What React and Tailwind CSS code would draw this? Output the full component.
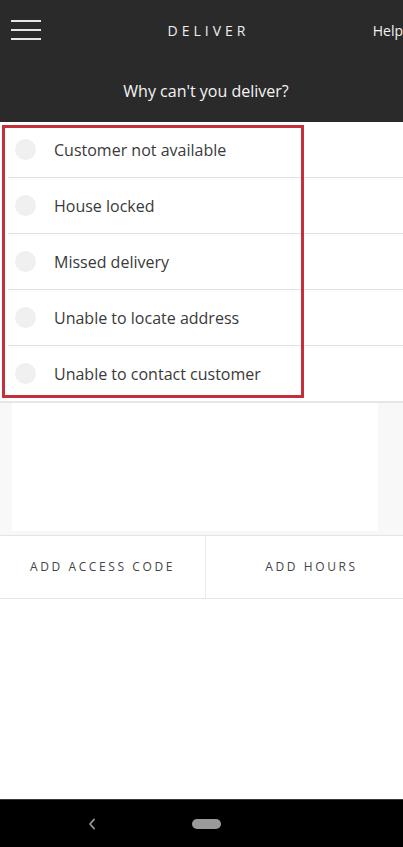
import React from 'react';

const reasons = [
  'Customer not available',
  'House locked',
  'Missed delivery',
  'Unable to locate address',
  'Unable to contact customer',
];

const ReasonRow = ({ label }) => (
  <div className="flex h-[55px] items-center">
    <div className="ml-[15px] h-[21px] w-[21px] shrink-0 rounded-full bg-[#f0f0f0]" />
    <span className="ml-[18px] text-[16px] text-[#3a3a3a]">{label}</span>
  </div>
);

export default function App() {
  return (
    <div className="flex h-[847px] w-[403px] flex-col overflow-hidden bg-white font-['Open_Sans',sans-serif]">
      {/* header */}
      <div className="h-[122px] shrink-0 bg-[#2b2a2a] text-white">
        <div className="relative flex h-[60px] items-center">
          <div className="ml-[11px] flex w-[30px] flex-col gap-[7px]">
            <div className="h-[2px] bg-[#e6e6e6]" />
            <div className="h-[2px] bg-[#e6e6e6]" />
            <div className="h-[2px] bg-[#e6e6e6]" />
          </div>
          <div className="absolute left-0 right-0 pl-[14px] text-center text-[14px] tracking-[4px] text-[#eeeeee]">DELIVER</div>
          <div className="ml-auto mr-0 text-[14px] text-[#f2f2f2]">Help</div>
        </div>
        <div className="mt-[19px] pl-[9px] text-center text-[16px] text-[#f4f4f4]">Why can't you deliver?</div>
      </div>

      {/* reasons */}
      <div className="relative">
        {reasons.map((r, i) => (
          <div key={r}>
            <ReasonRow label={r} />
            {i < reasons.length - 1 && <div className="ml-[8px] h-px bg-[#e2e2e2]" />}
          </div>
        ))}
        <div className="h-[2px] bg-[#e6e6e6]" />
        <div className="pointer-events-none absolute left-[2px] top-[3px] h-[273px] w-[302px] border-[3px] border-[#c3303c]" />
      </div>

      {/* notes area */}
      <div className="flex h-[132px] shrink-0 bg-[#f8f8f8] px-[12px] pr-[25px]">
        <div className="h-[128px] flex-1 bg-white" />
      </div>
      <div className="h-px bg-[#e4e4e4]" />

      {/* actions */}
      <div className="flex h-[62px] shrink-0">
        <button className="flex-1 border-r border-[#ececec] text-[12px] tracking-[2.6px] text-[#454545]">ADD ACCESS CODE</button>
        <button className="w-[197px] pl-[14px] text-[12px] tracking-[2.6px] text-[#454545]">ADD HOURS</button>
      </div>
      <div className="h-px bg-[#e4e4e4]" />

      <div className="flex-1" />

      {/* android nav */}
      <div className="flex h-[48px] shrink-0 items-center border-t border-[#3a3a3a] bg-black">
        <svg className="ml-[87px]" width="10" height="12" viewBox="0 0 10 12" fill="none">
          <path d="M7 1.5 L3 6 L7 10.5" stroke="#9a9a9a" strokeWidth="1.8" strokeLinecap="round" strokeLinejoin="round" />
        </svg>
        <div className="ml-[95px] h-[10px] w-[29px] rounded-full bg-[#9a9a9a]" />
      </div>
    </div>
  );
}
